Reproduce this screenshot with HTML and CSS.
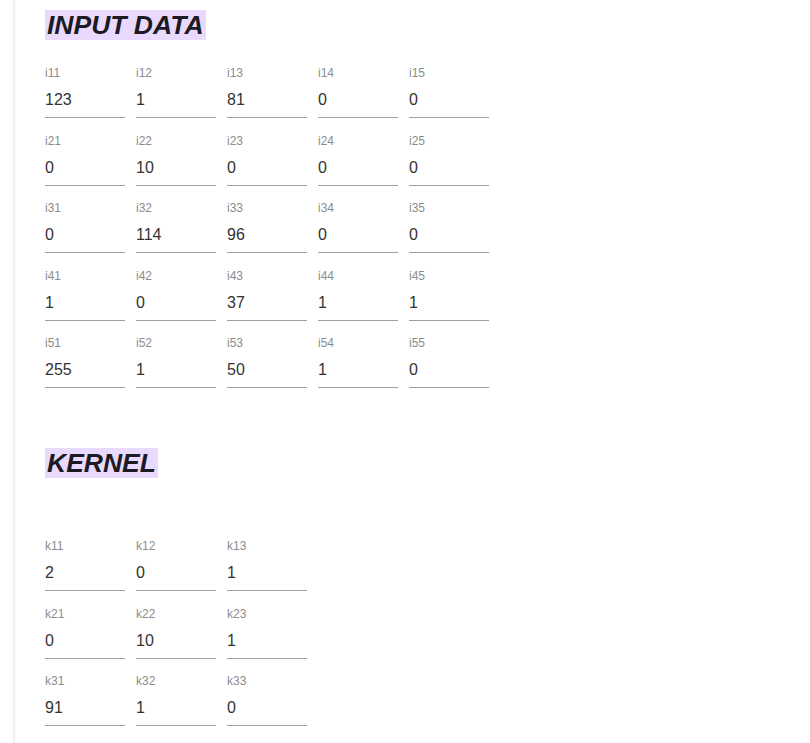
FILE: index.html
```html
<!DOCTYPE html>
<html lang="en">
<head>
  <meta charset="UTF-8" />
  <meta name="viewport" content="width=device-width, initial-scale=1.0"/>
  <title>Convolution</title>
  <link rel="stylesheet" href="styles.css">
</head>
<body>
  <div class="card">

    <h2 class="section-title"><span>INPUT DATA</span></h2>
    <div class="matrix cols-5">
      <div class="field"><label>i11</label><input type="text" value="123"></div>
      <div class="field"><label>i12</label><input type="text" value="1"></div>
      <div class="field"><label>i13</label><input type="text" value="81"></div>
      <div class="field"><label>i14</label><input type="text" value="0"></div>
      <div class="field"><label>i15</label><input type="text" value="0"></div>

      <div class="field"><label>i21</label><input type="text" value="0"></div>
      <div class="field"><label>i22</label><input type="text" value="10"></div>
      <div class="field"><label>i23</label><input type="text" value="0"></div>
      <div class="field"><label>i24</label><input type="text" value="0"></div>
      <div class="field"><label>i25</label><input type="text" value="0"></div>

      <div class="field"><label>i31</label><input type="text" value="0"></div>
      <div class="field"><label>i32</label><input type="text" value="114"></div>
      <div class="field"><label>i33</label><input type="text" value="96"></div>
      <div class="field"><label>i34</label><input type="text" value="0"></div>
      <div class="field"><label>i35</label><input type="text" value="0"></div>

      <div class="field"><label>i41</label><input type="text" value="1"></div>
      <div class="field"><label>i42</label><input type="text" value="0"></div>
      <div class="field"><label>i43</label><input type="text" value="37"></div>
      <div class="field"><label>i44</label><input type="text" value="1"></div>
      <div class="field"><label>i45</label><input type="text" value="1"></div>

      <div class="field"><label>i51</label><input type="text" value="255"></div>
      <div class="field"><label>i52</label><input type="text" value="1"></div>
      <div class="field"><label>i53</label><input type="text" value="50"></div>
      <div class="field"><label>i54</label><input type="text" value="1"></div>
      <div class="field"><label>i55</label><input type="text" value="0"></div>
    </div>

    <h2 class="section-title kernel-title"><span>KERNEL</span></h2>
    <div class="matrix cols-3">
      <div class="field"><label>k11</label><input type="text" value="2"></div>
      <div class="field"><label>k12</label><input type="text" value="0"></div>
      <div class="field"><label>k13</label><input type="text" value="1"></div>

      <div class="field"><label>k21</label><input type="text" value="0"></div>
      <div class="field"><label>k22</label><input type="text" value="10"></div>
      <div class="field"><label>k23</label><input type="text" value="1"></div>

      <div class="field"><label>k31</label><input type="text" value="91"></div>
      <div class="field"><label>k32</label><input type="text" value="1"></div>
      <div class="field"><label>k33</label><input type="text" value="0"></div>
    </div>

  </div>
</body>
</html>
```

FILE: styles.css
```css
body {
  margin: 0;
  background-color: white;
  font-family: "Liberation Sans", Arial, sans-serif;
  overflow: hidden;
}

.card {
  margin-left: 15px;
  min-height: 100vh;
  padding: 10px 30px 40px;
  background-color: white;
  box-shadow: -1px 0 3px rgba(0, 0, 0, 0.12);
  box-sizing: border-box;
}

.section-title {
  margin: 0 0 26px;
  font-size: 26.5px;
  font-weight: bold;
  font-style: italic;
  line-height: 30px;
  color: #1c1a22;
}

.section-title span {
  display: inline-block;
  height: 30px;
  padding: 0 2px;
  background-color: #e9d9fd;
}

.kernel-title {
  margin-top: 60px;
  margin-bottom: 61px;
}

.matrix {
  display: grid;
  column-gap: 11px;
  row-gap: 15.5px;
}

.cols-5 { grid-template-columns: repeat(5, 80px); }
.cols-3 { grid-template-columns: repeat(3, 80px); }

.field {
  display: flex;
  flex-direction: column;
}

.field label {
  font-size: 12px;
  line-height: 14px;
  color: #8c8c8c;
  margin-bottom: 10px;
}

.field input {
  width: 80px;
  height: 28px;
  box-sizing: border-box;
  margin: 0;
  padding: 0 0 7px;
  border: none;
  border-bottom: 1px solid #a0a0a0;
  outline: none;
  font-family: "Liberation Sans", Arial, sans-serif;
  font-size: 16px;
  line-height: 20px;
  color: #333;
  background: transparent;
}
```
